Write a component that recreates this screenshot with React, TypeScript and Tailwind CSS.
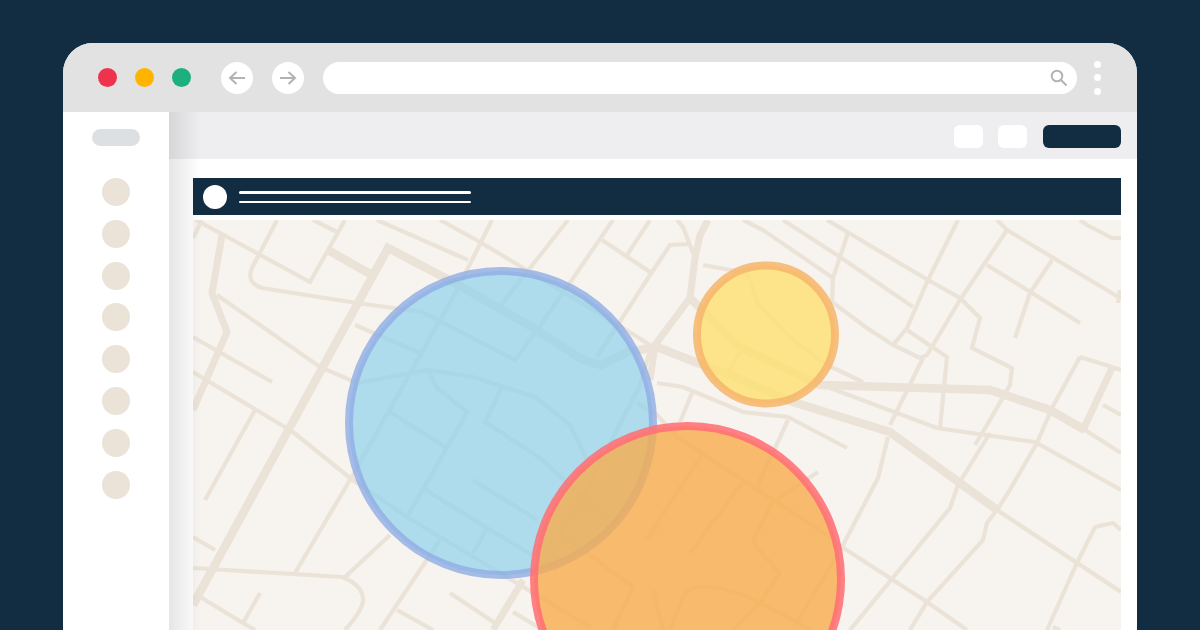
const thin: string[] = [
  "M196 220L310 282L345 220",
  "M313 220L337 232",
  "M277 220L252 268Q246 283 262 288L357 303L422 312L515 360L537 330L567 287L613 220",
  "M500 306L568 220",
  "M377 220L468 260",
  "M492 220L457 290L350 480L295 573",
  "M440 220L480 242L623 328L650 345",
  "M602 240L650 272",
  "M627 255L650 220",
  "M597 357L650 275L670 245L690 244",
  "M217 295L320 367L357 383L428 370L473 377L535 397L570 425L587 460",
  "M355 325L420 353",
  "M428 370L437 388L467 412L457 430",
  "M390 412L445 447",
  "M463 420L407 517",
  "M423 488L487 528L557 570",
  "M503 385L485 422L540 458L607 520",
  "M473 480L537 520",
  "M193 372L293 432L350 478L407 517L590 627",
  "M487 528L473 553",
  "M440 540L380 630",
  "M397 610L433 630",
  "M450 593L495 623",
  "M513 612L543 630",
  "M390 535L345 577",
  "M193 568L342 577Q363 585 363 600Q363 610 345 630",
  "M197 595L243 623L260 593",
  "M243 623L255 630",
  "M255 410L205 500",
  "M193 537L215 550",
  "M193 337L272 382",
  "M193 238L202 220",
  "M677 220L683 227L695 258",
  "M740 352L728 373",
  "M703 265L747 273L757 302L787 335L827 365L863 382",
  "M743 220L763 230L833 278L832 302L867 328L893 345L920 358",
  "M783 220L840 257L913 307",
  "M848 233L833 278",
  "M827 220L928 280L960 298L980 318L972 348L1012 368L1010 385L987 425L975 445",
  "M958 220L928 280L907 328L893 345",
  "M907 330L947 357L940 428",
  "M920 358L927 355L960 300L1007 230L997 220",
  "M1007 230L1120 298",
  "M1120 290L1118 303",
  "M987 265L1080 323",
  "M1052 260L1030 293L1015 338",
  "M1080 220L1087 225L1112 238L1121 238",
  "M923 358L890 425",
  "M1080 357L1112 367L1121 370",
  "M1080 357L1052 408L1037 443",
  "M1103 405L1121 415",
  "M830 388L937 428L1035 442L1121 490",
  "M1085 430L1121 453",
  "M657 383L683 387L743 412L788 417L847 448",
  "M692 393L680 422",
  "M788 420L757 487",
  "M888 437L878 478L842 547",
  "M1037 443L1008 493L997 510L987 523L983 540L927 602L910 630",
  "M990 433L958 485L950 508L850 630",
  "M677 437L830 537L842 547L927 602L967 630",
  "M702 455L650 533",
  "M742 483L690 553",
  "M818 472L773 502L755 537Q752 543 757 548L780 573L760 603L733 630",
  "M670 630L683 597Q690 585 710 587Q730 588 760 603L797 622L842 547",
  "M797 622L810 630",
  "M653 590L663 630",
  "M1047 630L1077 563L1095 527L1113 523L1121 530",
  "M1053 627L1060 630",
  "M560 533L633 587L613 630",
  "M650 350L640 385L583 497L560 533",
  "M637 403L657 415L677 437",
  "M645 540L660 523",
];

const mid: string[] = [
  "M222 235L212 293L227 332L193 410",
  "M708 220L700 235L695 258L690 298L655 345L650 380",
  "M1112 368L1083 430",
  "M523 580L493 630",
];

const thick: string[] = [
  "M328 250L372 275",
  "M193 605L290 427L388 248L453 282L537 330L583 360L601 365L627 352L657 347L690 360L730 375L793 402L890 432L997 510",
  "M690 298L740 347L820 385L990 390L1050 410L1085 430",
];

function Map() {
  return (
    <svg className="block h-[410px] w-[928px]" viewBox="193 220 928 410" fill="none">
      <rect x="193" y="220" width="928" height="410" fill="#f7f3ef" />
      <g stroke="#ebe3d8" strokeLinejoin="miter">
        {thin.map((d) => (
          <path key={d} d={d} strokeWidth="4.2" />
        ))}
        {mid.map((d) => (
          <path key={d} d={d} strokeWidth="7" />
        ))}
        {thick.map((d) => (
          <path key={d} d={d} strokeWidth="8.5" />
        ))}
        <path d="M997 510L1121 592" strokeWidth="4.4" />
      </g>
      <circle cx="501" cy="423" r="152" fill="#8fd2ed" fillOpacity="0.7" stroke="#8fade4" strokeOpacity="0.8" strokeWidth="8" />
      <circle cx="766" cy="334.5" r="69" fill="#fee078" fillOpacity="0.85" stroke="#f6b56a" strokeOpacity="0.85" strokeWidth="8" />
      <circle cx="687.5" cy="579.5" r="153.5" fill="#f7ad4e" fillOpacity="0.8" stroke="#ff6f75" strokeOpacity="0.88" strokeWidth="8" />
    </svg>
  );
}

export default function App() {
  return (
    <div className="h-[630px] w-[1200px] overflow-hidden bg-[#122d42] px-[63px] pt-[43px]">
      <div className="flex h-[620px] flex-col overflow-hidden rounded-t-[30px] bg-white">
        <div className="flex h-[69px] shrink-0 items-center bg-[#e2e2e2] pl-[35px]">
          <div className="flex items-center gap-[18px]">
            <span className="h-[19px] w-[19px] rounded-full bg-[#ef334c]" />
            <span className="h-[19px] w-[19px] rounded-full bg-[#ffb400]" />
            <span className="h-[19px] w-[19px] rounded-full bg-[#1eaf7f]" />
          </div>
          <div className="ml-[30px] flex items-center gap-[19px]">
            <span className="flex h-8 w-8 items-center justify-center rounded-full bg-white">
              <svg width="20" height="16" viewBox="0 0 20 16" fill="none" stroke="#b3b3b3" strokeWidth="2">
                <path d="M18 8H3M9.5 2L3 8L9.5 14" />
              </svg>
            </span>
            <span className="flex h-8 w-8 items-center justify-center rounded-full bg-white">
              <svg width="20" height="16" viewBox="0 0 20 16" fill="none" stroke="#b3b3b3" strokeWidth="2">
                <path d="M2 8H17M10.5 2L17 8L10.5 14" />
              </svg>
            </span>
          </div>
          <div className="ml-[19px] flex h-8 w-[754px] items-center justify-end rounded-full bg-white pr-[9px]">
            <svg width="18" height="18" viewBox="0 0 18 18" fill="none" stroke="#b3b3b3" strokeWidth="2">
              <circle cx="7" cy="7" r="5.3" />
              <path d="M11 11L16.5 16.5" />
            </svg>
          </div>
          <div className="ml-[17px] flex flex-col gap-[6.5px]">
            <span className="h-[7px] w-[7px] rounded-full bg-white" />
            <span className="h-[7px] w-[7px] rounded-full bg-white" />
            <span className="h-[7px] w-[7px] rounded-full bg-white" />
          </div>
        </div>

        <div className="relative flex min-h-0 flex-1">
          <aside className="flex w-[106px] shrink-0 flex-col items-center bg-white pt-[17px]">
            <span className="h-[17px] w-12 rounded-full bg-[#dce0e3]" />
            <div className="mt-[32px] flex flex-col gap-[13.8px]">
              {[0, 1, 2, 3, 4, 5, 6, 7].map((i) => (
                <span key={i} className="block h-[28px] w-[28px] rounded-full bg-[#ebe3d8]" />
              ))}
            </div>
          </aside>

          <div className="relative flex min-w-0 flex-1 flex-col">
            <div className="absolute inset-y-0 left-0 w-8 bg-linear-to-r from-black/10 to-transparent" />
            <div className="flex h-[47px] shrink-0 items-center justify-end bg-[#eeeef0] pr-4 pt-0.5">
              <span className="h-[23px] w-[29px] rounded-md bg-white" />
              <span className="ml-[15px] h-[23px] w-[29px] rounded-md bg-white" />
              <span className="ml-[16px] h-[23px] w-[78px] rounded-md bg-[#122d42]" />
            </div>
            <div className="flex flex-col pl-6 pt-[19px]">
              <div className="relative flex h-[37px] w-[928px] items-center bg-[#122d42] pl-[10px]">
                <span className="h-6 w-6 rounded-full bg-white" />
                <div className="ml-3 flex flex-col gap-[7px]">
                  <span className="block h-[3px] w-[232px] rounded-full bg-white" />
                  <span className="block h-[2px] w-[232px] rounded-full bg-white" />
                </div>
              </div>
              <div className="mt-[5px]">
                <Map />
              </div>
            </div>
          </div>
        </div>
      </div>
    </div>
  );
}
